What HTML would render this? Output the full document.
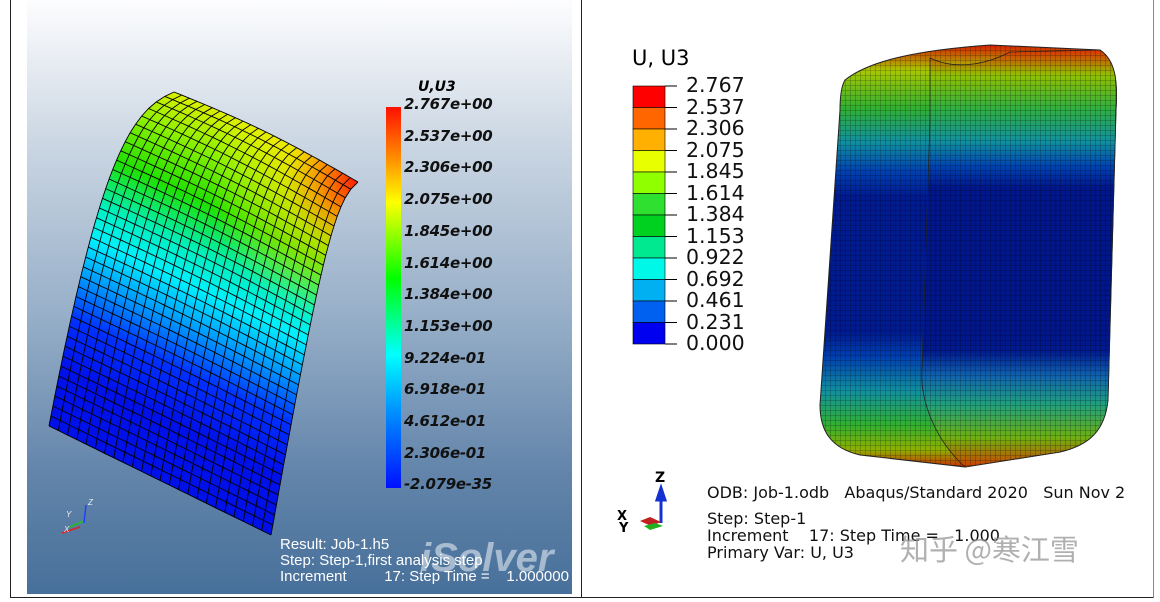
<!DOCTYPE html>
<html><head><meta charset="utf-8"><style>
html,body{margin:0;padding:0;background:#fff;width:1160px;height:602px;overflow:hidden;position:relative;font-family:"Liberation Sans",sans-serif}
.abs{position:absolute;white-space:nowrap}
.ll{font-family:"DejaVu Sans",sans-serif;font-style:italic;font-weight:bold;font-size:15px;color:#111;left:404px;letter-spacing:-0.3px}
.rl{font-family:"DejaVu Sans",sans-serif;font-size:20.5px;color:#111;left:686px;line-height:21px}
.rt{font-family:"DejaVu Sans",sans-serif;font-size:16px;color:#111}
</style></head><body>
<div class="abs" style="left:10px;top:0;width:1px;height:598px;background:#222"></div>
<div class="abs" style="left:10px;top:597px;width:1144px;height:1px;background:#222"></div>
<div class="abs" style="left:581px;top:0;width:1px;height:598px;background:#222"></div>
<div class="abs" style="left:1153px;top:0;width:1px;height:598px;background:#888"></div>
<div class="abs" style="left:27px;top:0;width:545px;height:594px;background:linear-gradient(#fdfdfe 0%,#c9d5e2 25%,#93acc6 55%,#6284aa 80%,#47709a 100%)"></div>
<svg class="abs" style="left:0;top:0" width="1160" height="602" id="sv">
<defs>
<linearGradient id="gl" gradientUnits="userSpaceOnUse" x1="174" y1="92" x2="45" y2="362">
<stop offset="0" stop-color="#d8f000"/><stop offset="0.12" stop-color="#90f000"/><stop offset="0.29" stop-color="#20e000"/><stop offset="0.45" stop-color="#00f0c0"/><stop offset="0.56" stop-color="#00f0ff"/><stop offset="0.7" stop-color="#0090ff"/><stop offset="0.83" stop-color="#0030ff"/><stop offset="1" stop-color="#0010e8"/></linearGradient>
<radialGradient id="rr" gradientUnits="userSpaceOnUse" cx="360" cy="180" r="150">
<stop offset="0" stop-color="#ff1000" stop-opacity="1"/><stop offset="0.25" stop-color="#ff8000" stop-opacity="0.9"/><stop offset="0.5" stop-color="#ffe000" stop-opacity="0.6"/><stop offset="1" stop-color="#ffff00" stop-opacity="0"/></radialGradient>
<linearGradient id="gb" x1="0" y1="1" x2="0" y2="0"><stop offset="0" stop-color="#0010ff"/><stop offset="0.2" stop-color="#0090ff"/><stop offset="0.35" stop-color="#00ffff"/><stop offset="0.55" stop-color="#00ff00"/><stop offset="0.75" stop-color="#ffff00"/><stop offset="0.88" stop-color="#ff8000"/><stop offset="1" stop-color="#ff1000"/></linearGradient>
<linearGradient id="gr" x1="0" y1="0" x2="0" y2="1">
<stop offset="0" stop-color="#d82000"/><stop offset="0.06" stop-color="#a8c800"/><stop offset="0.15" stop-color="#30b030"/><stop offset="0.23" stop-color="#1090a0"/><stop offset="0.3" stop-color="#0040b0"/><stop offset="0.36" stop-color="#001a90"/><stop offset="0.68" stop-color="#001a90"/><stop offset="0.74" stop-color="#0040b0"/><stop offset="0.82" stop-color="#1090a0"/><stop offset="0.9" stop-color="#30b030"/><stop offset="0.96" stop-color="#90b000"/><stop offset="1" stop-color="#c83000"/></linearGradient>
<linearGradient id="gr2" x1="0" y1="0" x2="0" y2="1">
<stop offset="0" stop-color="#e03000"/><stop offset="0.06" stop-color="#90c000"/><stop offset="0.14" stop-color="#30b040"/><stop offset="0.22" stop-color="#1090a0"/><stop offset="0.28" stop-color="#0040b0"/><stop offset="0.33" stop-color="#00168a"/><stop offset="0.72" stop-color="#00168a"/><stop offset="0.78" stop-color="#1060b0"/><stop offset="0.85" stop-color="#20a080"/><stop offset="0.93" stop-color="#70b010"/><stop offset="1" stop-color="#d04000"/></linearGradient>
<pattern id="pg" width="5" height="5" patternUnits="userSpaceOnUse"><path d="M0 0H5M0 0V5" stroke="#000" stroke-opacity="0.5" stroke-width="0.8" fill="none"/></pattern>
<clipPath id="cs"><path id="sp" d=""/></clipPath>
</defs>
<g clip-path="url(#cs)"><rect x="0" y="0" width="600" height="600" fill="url(#gl)"/><rect x="0" y="0" width="600" height="600" fill="url(#rr)"/></g>
<g id="lg" stroke="#000" stroke-width="0.9" fill="none"></g>
<rect x="386" y="107" width="15" height="381" fill="url(#gb)"/>
<path d="M845 80 C870 60 920 50 990 45 L1100 50 C1115 60 1118 80 1116 110 L1108 400 C1105 430 1090 445 1060 452 L965 467 L860 455 C830 448 820 430 820 405 L840 110 C840 95 842 85 845 80Z" fill="url(#gr)"/>
<path d="M845 80 C870 60 920 50 990 45 L1100 50 C1115 60 1118 80 1116 110 L1108 400 C1105 430 1090 445 1060 452 L965 467 L860 455 C830 448 820 430 820 405 L840 110 C840 95 842 85 845 80Z" fill="url(#pg)" stroke="#222" stroke-width="1"/>
<path d="M930 58 C955 70 985 65 1010 52 L1100 50 C1115 60 1118 80 1116 110 L1108 400 C1105 430 1090 445 1060 452 L965 467 C935 440 920 400 922 370 L930 120Z" fill="url(#gr2)" opacity="0.9"/>
<path d="M930 58 C955 70 985 65 1010 52 L1100 50 C1115 60 1118 80 1116 110 L1108 400 C1105 430 1090 445 1060 452 L965 467 C935 440 920 400 922 370 L930 120Z" fill="url(#pg)" stroke="#222" stroke-width="0.8"/>
<g id="rb"></g>
<g stroke-width="1.5"><line x1="70" y1="527" x2="84" y2="521" stroke="#20c020"/><line x1="84" y1="523" x2="86" y2="505" stroke="#2040ff"/><line x1="62" y1="533" x2="80" y2="527" stroke="#e02020"/></g>
<text x="66" y="517" font-size="8" fill="#eee" font-style="italic">Y</text><text x="88" y="505" font-size="8" fill="#eee" font-style="italic">Z</text><text x="64" y="532" font-size="8" fill="#eee" font-style="italic">X</text>
<path d="M661 523 L661 498 M657 500 L661 488 L665 500Z" stroke="#1530d0" stroke-width="3" fill="#1530d0"/>
<path d="M640 521 L650 517 L661 522 L651 526Z" fill="#c02020"/><path d="M644 526 L655 523 L663 526 L650 530Z" fill="#20b020"/>
<text x="655" y="482" font-family="DejaVu Sans" font-weight="bold" font-size="14">Z</text>
<text x="617" y="520" font-family="DejaVu Sans" font-weight="bold" font-size="13">X</text>
<text x="619" y="532" font-family="DejaVu Sans" font-weight="bold" font-size="13">Y</text>
</svg>
<div class="abs" style="left:418px;top:79px;font-family:'DejaVu Sans';font-style:italic;font-weight:bold;font-size:14px">U,U3</div>
<div id="ll"></div>
<div class="abs" style="left:632px;top:46px;font-family:'DejaVu Sans';font-size:21px">U, U3</div>
<div id="rlg"></div>
<div class="abs" style="left:280px;top:537px;color:#fff;font-size:15px;line-height:16px">Result: Job-1.h5<br>Step: Step-1,first analysis step<br>Increment &nbsp;&nbsp;&nbsp;&nbsp;&nbsp;&nbsp;&nbsp;&nbsp;17: Step Time = &nbsp;&nbsp;&nbsp;1.000000</div>
<div class="abs" style="left:420px;top:536px;color:rgba(255,255,255,0.5);font-size:40px;font-style:italic;font-weight:bold">iSolver</div>
<div class="abs rt" style="left:707px;top:483px">ODB: Job-1.odb &nbsp;&nbsp;Abaqus/Standard 2020 &nbsp;&nbsp;Sun Nov 2</div>
<div class="abs rt" style="left:707px;top:510px;line-height:17px">Step: Step-1<br>Increment &nbsp;&nbsp;&nbsp;17: Step Time = &nbsp;&nbsp;1.000<br>Primary Var: U, U3</div>
<div class="abs" style="left:900px;top:527px;font-family:'Noto Sans CJK SC',sans-serif;font-size:29px;color:rgba(150,150,150,0.75)">知乎 @寒江雪</div>
<script>
var ns="http://www.w3.org/2000/svg";
function L(g,pts){var p=document.createElementNS(ns,"polyline");p.setAttribute("points",pts.map(function(q){return q[0].toFixed(1)+","+q[1].toFixed(1)}).join(" "));g.appendChild(p);}
function bez(a,b,c,d,t){var u=1-t;return [u*u*u*a[0]+3*u*u*t*b[0]+3*u*t*t*c[0]+t*t*t*d[0],u*u*u*a[1]+3*u*u*t*b[1]+3*u*t*t*c[1]+t*t*t*d[1]];}
function arcfn(a,b,c,d){var N=400,P=[],S=[0];for(var i=0;i<=N;i++){P.push(bez(a,b,c,d,i/N));if(i>0){var dx=P[i][0]-P[i-1][0],dy=P[i][1]-P[i-1][1];S.push(S[i-1]+Math.sqrt(dx*dx+dy*dy));}}
return function(t){var s=t*S[N];var k=0;while(k<N&&S[k+1]<s)k++;if(k>=N)return P[N];var f=(s-S[k])/((S[k+1]-S[k])||1);return [P[k][0]+(P[k+1][0]-P[k][0])*f,P[k][1]+(P[k+1][1]-P[k][1])*f];};}
var left=arcfn([174,92],[130,110],[100,160],[49,426]);
var right=arcfn([358,182],[335,200],[322,250],[271,535]);
function pt(s,t){var a=left(t),b=right(t);var bow=Math.sin(Math.PI*s)*(-5)*(1-t);return [a[0]+(b[0]-a[0])*s,a[1]+(b[1]-a[1])*s+bow];}
var g=document.getElementById("lg");var C=24,R=36;
for(var i=0;i<=R;i++){var pts=[];for(var j=0;j<=C;j++)pts.push(pt(j/C,i/R));L(g,pts);}
for(var j=0;j<=C;j++){var pts=[];for(var i=0;i<=R;i++)pts.push(pt(j/C,i/R));L(g,pts);}
var ol=[];for(var j=0;j<=C;j++)ol.push(pt(j/C,0));for(var i=0;i<=R;i++)ol.push(pt(1,i/R));for(var j=C;j>=0;j--)ol.push(pt(j/C,1));for(var i=R;i>=0;i--)ol.push(pt(0,i/R));
document.getElementById("sp").setAttribute("d","M"+ol.map(function(q){return q[0].toFixed(1)+" "+q[1].toFixed(1)}).join(" L")+"Z");
var labs=["2.767e+00","2.537e+00","2.306e+00","2.075e+00","1.845e+00","1.614e+00","1.384e+00","1.153e+00","9.224e-01","6.918e-01","4.612e-01","2.306e-01","-2.079e-35"];
var h="";labs.forEach(function(l,k){h+='<div class="abs ll" style="top:'+(95+k*31.7)+'px">'+l+'</div>';});
document.getElementById("ll").innerHTML=h;
var cols=["#ff0000","#ff6600","#ffb000","#e8ff00","#90ff00","#30e030","#00d020","#00e890","#00f8e8","#00b0f0","#0060f0","#0000f0"];
var rb=document.getElementById("rb");var y0=86,hh=21.5;
cols.forEach(function(c,k){var r=document.createElementNS(ns,"rect");r.setAttribute("x",633);r.setAttribute("y",y0+k*hh);r.setAttribute("width",32);r.setAttribute("height",hh);r.setAttribute("fill",c);r.setAttribute("stroke","#000");r.setAttribute("stroke-width","0.6");rb.appendChild(r);});
var rl=["2.767","2.537","2.306","2.075","1.845","1.614","1.384","1.153","0.922","0.692","0.461","0.231","0.000"];h="";
rl.forEach(function(l,k){var y=y0+k*hh;var ln=document.createElementNS(ns,"line");ln.setAttribute("x1",665);ln.setAttribute("x2",677);ln.setAttribute("y1",y);ln.setAttribute("y2",y);ln.setAttribute("stroke","#000");rb.appendChild(ln);h+='<div class="abs rl" style="top:'+(y-11)+'px">'+l+'</div>';});
document.getElementById("rlg").innerHTML=h;
</script>
</body></html>
